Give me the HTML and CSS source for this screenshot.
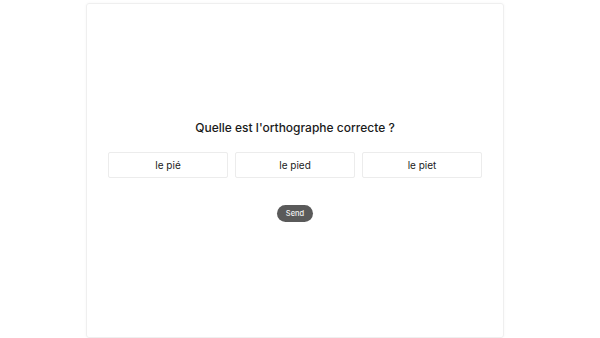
FILE: index.html
```html
<!DOCTYPE html>
<html lang="fr">
<head>
    <meta charset="UTF-8">
    <meta name="viewport" content="width=device-width, initial-scale=1.0">
    <title>Quiz</title>
    <link rel="stylesheet" href="styles.css">
</head>
<body>
    <div class="card">
        <div class="question">Quelle est l'orthographe correcte ?</div>
        <div class="options">
            <button class="option">le pié</button>
            <button class="option">le pied</button>
            <button class="option">le piet</button>
        </div>
        <button class="send">Send</button>
    </div>
</body>
</html>
```

FILE: styles.css
```css
body {
    margin: 0;
    padding: 0;
    background: #ffffff;
    font-family: 'Inter', 'Roboto', sans-serif;
}

.card {
    box-sizing: border-box;
    width: 418px;
    height: 335px;
    margin: 3px 0 0 86px;
    padding: 0 21px;
    border: 1px solid #efefef;
    border-radius: 3px;
    box-shadow: 0 0 3px rgba(0, 0, 0, 0.04);
    display: flex;
    flex-direction: column;
    align-items: center;
    justify-content: center;
}

.question {
    font-size: 12px;
    font-weight: 500;
    color: #1a1a1a;
    margin-bottom: 17px;
}

.options {
    display: flex;
    gap: 7px;
    width: 100%;
    margin-bottom: 27px;
}

.option {
    flex: 1;
    height: 26px;
    background: #ffffff;
    border: 1px solid #ececec;
    border-radius: 2px;
    font-family: inherit;
    font-size: 10px;
    color: #222;
    padding: 0;
}

.send {
    background: #5a5a5a;
    color: #f0f0f0;
    border: none;
    border-radius: 9px;
    height: 17px;
    padding: 0 9px;
    font-family: inherit;
    font-size: 7.5px;
    font-weight: 500;
}
```
